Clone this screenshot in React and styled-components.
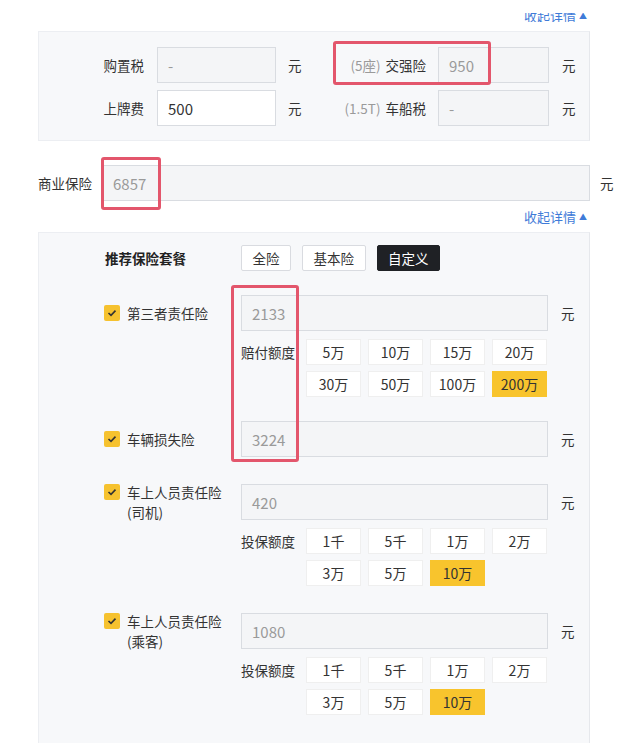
import React from 'react';
import styled, { createGlobalStyle } from 'styled-components';

const GlobalStyle = createGlobalStyle`
  body {
    margin: 0;
    background: #fff;
    font-family: "Noto Sans CJK SC", "Noto Sans", sans-serif;
    font-size: 13.5px;
    color: #333;
  }
`;

const Page = styled.div`
  position: relative;
  padding: 13px 0 0 38px;
  width: 552px;
`;

const TopClip = styled.div`
  height: 9px;
  overflow: hidden;
  display: flex;
  justify-content: flex-end;
  align-items: flex-end;
  padding-right: 3px;
`;

const LinkRow = styled.div`
  display: flex;
  justify-content: flex-end;
  padding-right: 3px;
  margin-top: 6px;
  height: 19px;
`;

const Link = styled.span`
  color: #3f7bd8;
  font-size: 13px;
  line-height: ${(p) => (p.$clipped ? 13 : 19)}px;
  display: flex;
  align-items: center;
  gap: 3px;
  white-space: nowrap;
`;

const Arrow = styled.span`
  font-size: 8px;
`;

const Panel = styled.div`
  background: #f7f8fa;
  border: 1px solid #eceef2;
  border-right-color: #e6e8ec;
`;

const FeePanel = styled(Panel)`
  margin-top: 9px;
  padding: 15px 0 14px;
  display: grid;
  grid-template-columns: 118px 119px 25px 137px 111px auto;
  grid-auto-rows: 36px;
  row-gap: 7px;
  align-items: center;
`;

const FeeLabel = styled.div`
  text-align: right;
  padding-right: ${(p) => p.$pad || 13}px;
  white-space: nowrap;
`;

const Muted = styled.span`
  color: #9a9a9a;
  margin-right: 5px;
`;

const Unit = styled.div`
  padding-left: ${(p) => p.$pad || 12}px;
`;

const Field = styled.div`
  flex: none;
  height: 36px;
  box-sizing: border-box;
  border: 1px solid #d9dce1;
  background: ${(p) => (p.$white ? '#fff' : '#f4f5f7')};
  color: ${(p) => (p.$white ? '#333' : '#9a9a9a')};
  font-size: 15px;
  padding-left: 10px;
  display: flex;
  align-items: center;
  width: ${(p) => (p.$width ? `${p.$width}px` : 'auto')};
`;

const CommercialRow = styled.div`
  margin-top: 24px;
  display: flex;
  align-items: center;
  white-space: nowrap;
`;

const CommercialLabel = styled.div`
  flex: none;
  width: 54px;
  margin-right: 10px;
`;

const MainPanel = styled(Panel)`
  margin-top: 6px;
  padding: 12px 0 40px 65px;
  border-bottom: none;
  display: grid;
  grid-template-columns: 137px 307px auto;
  align-items: start;
`;

const PackTitle = styled.div`
  font-weight: 700;
  padding-left: 1px;
  height: 26px;
  line-height: 26px;
  color: #222;
`;

const PackButtons = styled.div`
  display: flex;
  gap: 11px;
  grid-column: 2 / 4;
`;

const PackButton = styled.div`
  height: 26px;
  box-sizing: border-box;
  padding: 0 10.5px;
  line-height: 24px;
  border: 1px solid ${(p) => (p.$active ? '#1f2125' : '#d9dbe0')};
  background: ${(p) => (p.$active ? '#1f2125' : '#fff')};
  color: ${(p) => (p.$active ? '#fff' : '#333')};
  border-radius: 2px;
`;

const ItemLabel = styled.div`
  margin-top: ${(p) => (p.$gap || 24) + (p.$multi ? -2 : 8)}px;
  display: flex;
  align-items: flex-start;
  gap: 7px;
  line-height: 20px;
`;

const Check = styled.span`
  flex: none;
  width: 16px;
  height: 16px;
  margin-top: 2px;
  border-radius: 2px;
  background: #f6c22f;
  display: flex;
  align-items: center;
  justify-content: center;
`;

const ItemBody = styled.div`
  margin-top: ${(p) => p.$gap || 24}px;
`;

const ItemUnit = styled.div`
  margin-top: ${(p) => (p.$gap || 24) + 8}px;
  padding-left: 13px;
  line-height: 20px;
`;

const OptionArea = styled.div`
  margin-top: 8px;
  display: grid;
  grid-template-columns: 58px repeat(4, 55px);
  column-gap: 7px;
  row-gap: 6px;
`;

const OptionLabel = styled.div`
  grid-row: 1;
  grid-column: 1;
  line-height: 26px;
  white-space: nowrap;
`;

const Option = styled.div`
  height: 26px;
  text-align: center;
  box-sizing: border-box;
  background: ${(p) => (p.$active ? '#f8c42d' : '#fff')};
  border: 1px solid ${(p) => (p.$active ? '#f8c42d' : '#efefef')};
  line-height: 24px;
  font-size: 14px;
  color: #333;
  grid-column: ${(p) => p.$col};
`;

const Highlight = styled.div`
  position: absolute;
  box-sizing: border-box;
  border: 3px solid #e3566c;
  border-radius: 3px;
  pointer-events: none;
`;

const CheckIcon = () => (
  <svg width="10" height="8" viewBox="0 0 10 8">
    <path d="M1.5 4l2.5 2.4L8.5 1.6" fill="none" stroke="#333" strokeWidth="1.6" />
  </svg>
);

const insurances = [
  {
    name: ['第三者责任险'],
    value: '2133',
    optLabel: '赔付额度',
    options: ['5万', '10万', '15万', '20万', '30万', '50万', '100万', '200万'],
    active: 7,
    gap: 24,
  },
  { name: ['车辆损失险'], value: '3224', gap: 24 },
  {
    name: ['车上人员责任险', '(司机)'],
    value: '420',
    optLabel: '投保额度',
    options: ['1千', '5千', '1万', '2万', '3万', '5万', '10万'],
    active: 6,
    gap: 27,
  },
  {
    name: ['车上人员责任险', '(乘客)'],
    value: '1080',
    optLabel: '投保额度',
    options: ['1千', '5千', '1万', '2万', '3万', '5万', '10万'],
    active: 6,
    gap: 27,
  },
];

export default function App() {
  return (
    <>
      <GlobalStyle />
      <Page>
        <TopClip>
          <Link $clipped>
            收起详情 <Arrow>▲</Arrow>
          </Link>
        </TopClip>

        <FeePanel>
          <FeeLabel>购置税</FeeLabel>
          <Field>-</Field>
          <Unit>元</Unit>
          <FeeLabel $pad={12}>
            <Muted>(5座)</Muted>交强险
          </FeeLabel>
          <Field>950</Field>
          <Unit $pad={13}>元</Unit>

          <FeeLabel>上牌费</FeeLabel>
          <Field $white>500</Field>
          <Unit>元</Unit>
          <FeeLabel $pad={12}>
            <Muted>(1.5T)</Muted>车船税
          </FeeLabel>
          <Field>-</Field>
          <Unit $pad={13}>元</Unit>
        </FeePanel>

        <CommercialRow>
          <CommercialLabel>商业保险</CommercialLabel>
          <Field $width={488}>6857</Field>
          <Unit $pad={10}>元</Unit>
        </CommercialRow>

        <LinkRow>
          <Link>
            收起详情 <Arrow>▲</Arrow>
          </Link>
        </LinkRow>

        <MainPanel>
          <PackTitle>推荐保险套餐</PackTitle>
          <PackButtons>
            <PackButton>全险</PackButton>
            <PackButton>基本险</PackButton>
            <PackButton $active>自定义</PackButton>
          </PackButtons>

          {insurances.map((item) => (
            <React.Fragment key={item.name.join('')}>
              <ItemLabel $gap={item.gap} $multi={item.name.length > 1}>
                <Check>
                  <CheckIcon />
                </Check>
                <div>
                  {item.name.map((line) => (
                    <div key={line}>{line}</div>
                  ))}
                </div>
              </ItemLabel>
              <ItemBody $gap={item.gap}>
                <Field>{item.value}</Field>
                {item.options && (
                  <OptionArea>
                    <OptionLabel>{item.optLabel}</OptionLabel>
                    {item.options.map((opt, i) => (
                      <Option key={opt} $active={i === item.active} $col={(i % 4) + 2}>
                        {opt}
                      </Option>
                    ))}
                  </OptionArea>
                )}
              </ItemBody>
              <ItemUnit $gap={item.gap}>元</ItemUnit>
            </React.Fragment>
          ))}
        </MainPanel>

        <Highlight style={{ left: 333, top: 41, width: 158, height: 44 }} />
        <Highlight style={{ left: 101, top: 157, width: 60, height: 53 }} />
        <Highlight style={{ left: 231, top: 285, width: 68, height: 177 }} />
      </Page>
    </>
  );
}
